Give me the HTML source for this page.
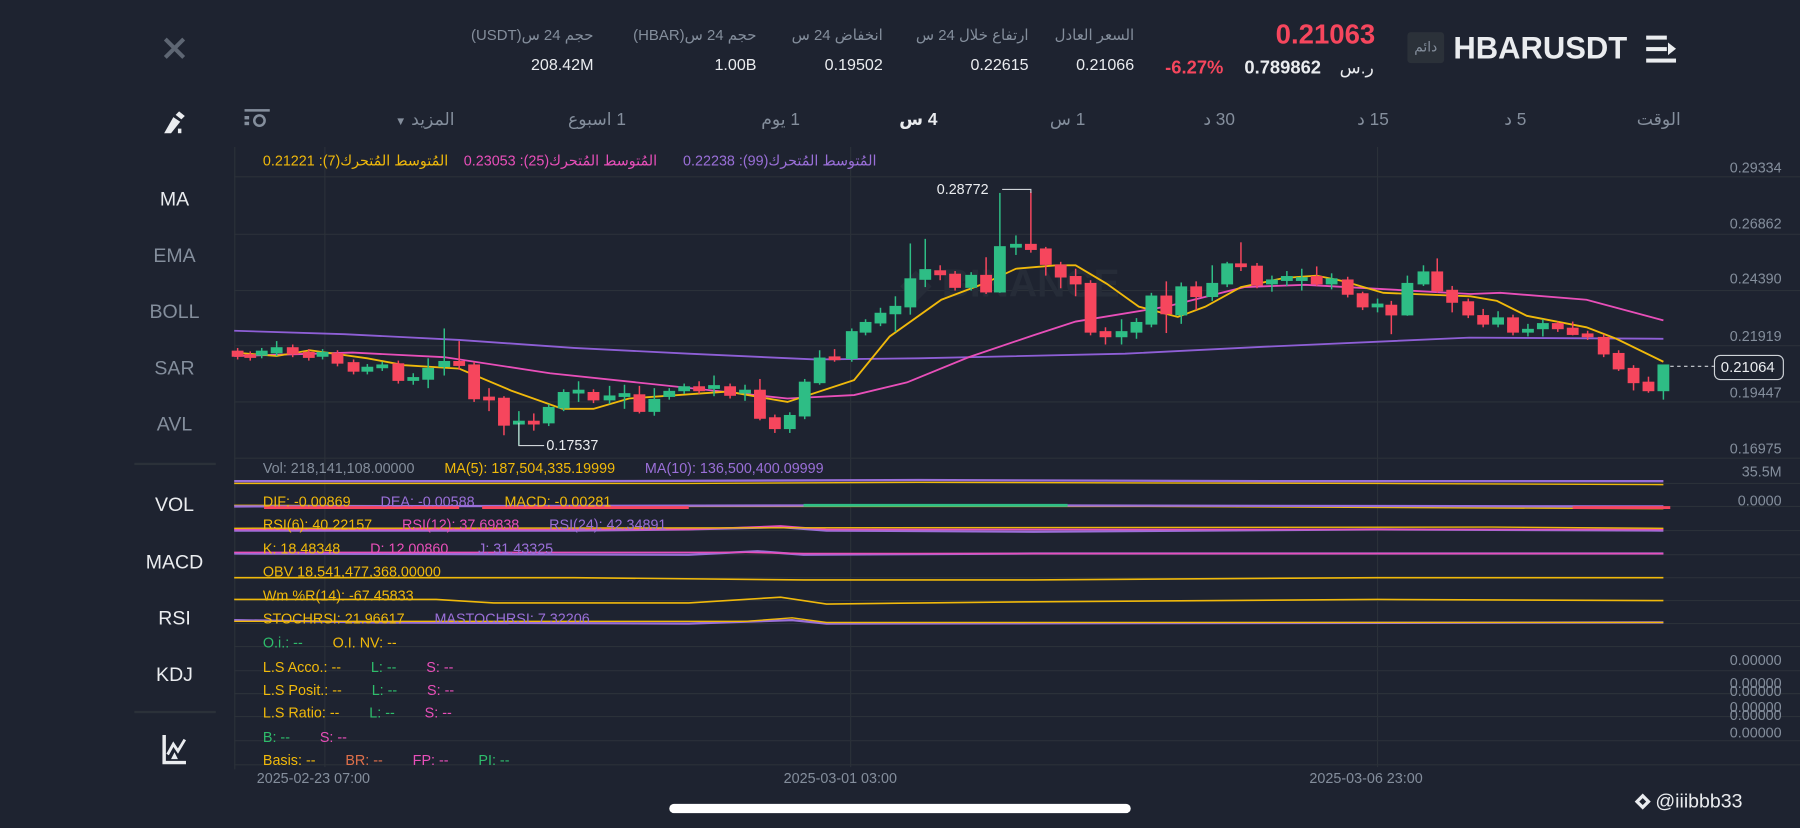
<!DOCTYPE html>
<html><head><meta charset="utf-8">
<style>
html,body{margin:0;padding:0;background:#1e2330;overflow:hidden;width:1800px;height:828px}
#w{position:absolute;left:0;top:0;width:1568px;height:721px;transform:scale(1.14796,1.1484);transform-origin:0 0;background:#1e2330;font-family:"Liberation Sans","DejaVu Sans",sans-serif;color:#848e9c}
.t{position:absolute;white-space:nowrap;line-height:1}
.r{text-align:right}
.g{color:#848e9c}.w{color:#eaecef}.y{color:#f0b90b}.p{color:#e84fb9}.v{color:#9a6fd8}.gr{color:#2ebd6b}.rd{color:#f6465d}.or{color:#e0704a}
.sb{position:absolute;left:102px;width:100px;text-align:center;font-size:17px;line-height:1}
.tab{position:absolute;top:97px;font-size:15px;line-height:1;color:#848e9c;transform:translateX(-50%)}
.ind{position:absolute;left:229px;font-size:12.5px;line-height:1;white-space:nowrap}
.ind span{margin-right:26px}
.ax{position:absolute;right:16px;font-size:12.5px;line-height:1;color:#848e9c;text-align:right}
</style></head><body><div id="w">
<svg width="1568" height="721" style="position:absolute;left:0;top:0">
<path d="M144 34 L160 50 M160 34 L144 50" stroke="#5e6673" stroke-width="3.5"/>
<path d="M143 116 L151 102 L157 106 L149 116 Z" fill="#eaecef"/><path d="M153 100 L156 97 L161 101 L158 104 Z" fill="#eaecef"/><rect x="155" y="112" width="3" height="4" fill="#eaecef"/>
<rect x="213" y="95" width="22" height="2.2" fill="#848e9c"/><rect x="213" y="101" width="4" height="3" fill="#848e9c"/><rect x="213" y="106" width="4" height="3" fill="#848e9c"/><circle cx="226" cy="105" r="4.5" fill="none" stroke="#848e9c" stroke-width="2.2"/>
<rect x="1434" y="31" width="18" height="3.5" fill="#eaecef"/><rect x="1434" y="41" width="18" height="3.5" fill="#eaecef"/><rect x="1434" y="51" width="26" height="3.5" fill="#eaecef"/><path d="M1453 37 L1460 42.5 L1453 48 Z" fill="#eaecef"/>
<rect x="117" y="403" width="71" height="2" fill="#2b3139"/><rect x="117" y="619" width="71" height="2" fill="#2b3139"/>
<path d="M143 640 V664 H162" stroke="#eaecef" stroke-width="3" fill="none"/><path d="M146 657 L151 648 L155 654 L161 644" stroke="#eaecef" stroke-width="2.5" fill="none"/><path d="M149 661 L152 655 L155 661Z" fill="#eaecef"/>
<line x1="204.5" y1="128" x2="204.5" y2="670" stroke="#2b3139"/>
<g stroke="#2b3139" stroke-width="1">
<line x1="204" y1="154" x2="1568" y2="154"/><line x1="204" y1="204" x2="1568" y2="204"/><line x1="204" y1="253" x2="1568" y2="253"/><line x1="204" y1="301" x2="1568" y2="301"/><line x1="204" y1="350" x2="1568" y2="350"/><line x1="204" y1="399" x2="1568" y2="399"/>
<line x1="283" y1="128" x2="283" y2="668"/><line x1="741" y1="128" x2="741" y2="668"/><line x1="1200" y1="128" x2="1200" y2="668"/>
<line x1="204" y1="421" x2="1568" y2="421"/><line x1="204" y1="441" x2="1568" y2="441"/><line x1="204" y1="462" x2="1568" y2="462"/><line x1="204" y1="483" x2="1568" y2="483"/><line x1="204" y1="503" x2="1568" y2="503"/><line x1="204" y1="523" x2="1568" y2="523"/><line x1="204" y1="543" x2="1568" y2="543"/><line x1="204" y1="563" x2="1568" y2="563"/><line x1="204" y1="584" x2="1568" y2="584"/><line x1="204" y1="604" x2="1568" y2="604"/><line x1="204" y1="624" x2="1568" y2="624"/><line x1="204" y1="645" x2="1568" y2="645"/><line x1="204" y1="666" x2="1568" y2="666"/>
</g>
<text x="880" y="258" font-size="34" font-weight="bold" fill="#262c38" text-anchor="middle" font-family="Liberation Sans">◆ BINANCE</text>
<polyline fill="none" stroke="#8e5fd6" stroke-width="1.6" points="204,288 300,291 400,296 500,303 600,308 710,313 800,312 980,308 1100,302 1280,294 1449,295"/>
<polyline fill="none" stroke="#e84fb9" stroke-width="1.6" points="204,310 307,307 387,311 479,325 583,336 686,347 744,344 790,333 844,311 900,292 937,280 1016,267 1084,250 1137,248 1281,256 1307,255 1382,261 1449,279"/>
<polyline fill="none" stroke="#f0b90b" stroke-width="1.6" points="204,307 241,310 270,305 320,312 352,318 400,321 445,340 490,356 517,356 548,347 634,341 686,350 744,331 775,293 820,261 857,247 885,234 920,231 937,231 964,247 992,267 1026,276 1050,267 1081,250 1119,242 1147,240 1171,245 1205,255 1281,258 1304,262 1330,275 1382,285 1408,295 1449,315"/>
<g stroke-width="1.3">
<g stroke="#f6465d" fill="#f6465d">
<line x1="207" y1="303" x2="207" y2="313"/><rect x="202.5" y="306" width="9" height="4"/>
<line x1="218" y1="306" x2="218" y2="314"/><rect x="213.5" y="309" width="9" height="2"/>
<line x1="255" y1="300" x2="255" y2="311"/><rect x="250.5" y="303" width="9" height="5"/>
<line x1="269" y1="304" x2="269" y2="314"/><rect x="264.5" y="307" width="9" height="4"/>
<line x1="294" y1="305" x2="294" y2="319"/><rect x="289.5" y="308" width="9" height="8"/>
<line x1="308" y1="313" x2="308" y2="326"/><rect x="303.5" y="316" width="9" height="7"/>
<line x1="347" y1="314" x2="347" y2="334"/><rect x="342.5" y="317" width="9" height="14"/>
<line x1="400" y1="297" x2="400" y2="322"/><rect x="395.5" y="315" width="9" height="3"/>
<line x1="413" y1="315" x2="413" y2="350"/><rect x="408.5" y="318" width="9" height="29"/>
<line x1="426" y1="338" x2="426" y2="358"/><rect x="421.5" y="346" width="9" height="2"/>
<line x1="439" y1="345" x2="439" y2="379"/><rect x="434.5" y="347" width="9" height="23"/>
<line x1="465" y1="360" x2="465" y2="375"/><rect x="460.5" y="367" width="9" height="2"/>
<line x1="517" y1="339" x2="517" y2="351"/><rect x="512.5" y="342" width="9" height="6"/>
<line x1="557" y1="336" x2="557" y2="360"/><rect x="552.5" y="344" width="9" height="14"/>
<line x1="609" y1="332" x2="609" y2="343"/><rect x="604.5" y="337" width="9" height="3"/>
<line x1="636" y1="334" x2="636" y2="347"/><rect x="631.5" y="337" width="9" height="7"/>
<line x1="662" y1="330" x2="662" y2="366"/><rect x="657.5" y="340" width="9" height="24"/>
<line x1="675" y1="361" x2="675" y2="377"/><rect x="670.5" y="364" width="9" height="9"/>
<line x1="727" y1="304" x2="727" y2="315"/><rect x="722.5" y="311" width="9" height="2"/>
<line x1="819" y1="231" x2="819" y2="244"/><rect x="814.5" y="236" width="9" height="3"/>
<line x1="832" y1="236" x2="832" y2="253"/><rect x="827.5" y="239" width="9" height="11"/>
<line x1="859" y1="224" x2="859" y2="256"/><rect x="854.5" y="240" width="9" height="14"/>
<line x1="898" y1="167" x2="898" y2="220"/><rect x="893.5" y="213" width="9" height="4"/>
<line x1="911" y1="215" x2="911" y2="240"/><rect x="906.5" y="217" width="9" height="13"/>
<line x1="924" y1="228" x2="924" y2="251"/><rect x="919.5" y="231" width="9" height="10"/>
<line x1="937" y1="234" x2="937" y2="258"/><rect x="932.5" y="241" width="9" height="6"/>
<line x1="950" y1="244" x2="950" y2="292"/><rect x="945.5" y="247" width="9" height="42"/>
<line x1="963" y1="285" x2="963" y2="300"/><rect x="958.5" y="289" width="9" height="4"/>
<line x1="1016" y1="245" x2="1016" y2="290"/><rect x="1011.5" y="258" width="9" height="15"/>
<line x1="1042" y1="245" x2="1042" y2="270"/><rect x="1037.5" y="250" width="9" height="8"/>
<line x1="1081" y1="211" x2="1081" y2="236"/><rect x="1076.5" y="230" width="9" height="2"/>
<line x1="1095" y1="229" x2="1095" y2="251"/><rect x="1090.5" y="232" width="9" height="16"/>
<line x1="1147" y1="232" x2="1147" y2="249"/><rect x="1142.5" y="241" width="9" height="6"/>
<line x1="1174" y1="241" x2="1174" y2="259"/><rect x="1169.5" y="244" width="9" height="12"/>
<line x1="1187" y1="254" x2="1187" y2="270"/><rect x="1182.5" y="256" width="9" height="11"/>
<line x1="1212" y1="262" x2="1212" y2="291"/><rect x="1207.5" y="266" width="9" height="8"/>
<line x1="1252" y1="225" x2="1252" y2="255"/><rect x="1247.5" y="237" width="9" height="16"/>
<line x1="1265" y1="249" x2="1265" y2="272"/><rect x="1260.5" y="253" width="9" height="10"/>
<line x1="1279" y1="260" x2="1279" y2="277"/><rect x="1274.5" y="263" width="9" height="11"/>
<line x1="1292" y1="269" x2="1292" y2="285"/><rect x="1287.5" y="275" width="9" height="7"/>
<line x1="1318" y1="274" x2="1318" y2="292"/><rect x="1313.5" y="277" width="9" height="12"/>
<line x1="1357" y1="280" x2="1357" y2="289"/><rect x="1352.5" y="282" width="9" height="4"/>
<line x1="1370" y1="280" x2="1370" y2="292"/><rect x="1365.5" y="286" width="9" height="5"/>
<line x1="1383" y1="288" x2="1383" y2="296"/><rect x="1378.5" y="291" width="9" height="2"/>
<line x1="1397" y1="291" x2="1397" y2="311"/><rect x="1392.5" y="294" width="9" height="14"/>
<line x1="1410" y1="305" x2="1410" y2="323"/><rect x="1405.5" y="308" width="9" height="13"/>
<line x1="1423" y1="318" x2="1423" y2="340"/><rect x="1418.5" y="321" width="9" height="12"/>
<line x1="1436" y1="328" x2="1436" y2="342"/><rect x="1431.5" y="333" width="9" height="7"/>
</g>
<g stroke="#2ebd85" fill="#2ebd85">
<line x1="228" y1="303" x2="228" y2="312"/><rect x="223.5" y="306" width="9" height="3"/>
<line x1="241" y1="297" x2="241" y2="310"/><rect x="236.5" y="303" width="9" height="4"/>
<line x1="281" y1="304" x2="281" y2="313"/><rect x="276.5" y="307" width="9" height="3"/>
<line x1="320" y1="317" x2="320" y2="326"/><rect x="315.5" y="320" width="9" height="3"/>
<line x1="333" y1="315" x2="333" y2="323"/><rect x="328.5" y="318" width="9" height="2"/>
<line x1="360" y1="325" x2="360" y2="335"/><rect x="355.5" y="329" width="9" height="2"/>
<line x1="373" y1="312" x2="373" y2="338"/><rect x="368.5" y="321" width="9" height="9"/>
<line x1="387" y1="286" x2="387" y2="327"/><rect x="382.5" y="315" width="9" height="4"/>
<line x1="452" y1="358" x2="452" y2="388"/><rect x="447.5" y="367" width="9" height="2"/>
<line x1="478" y1="352" x2="478" y2="371"/><rect x="473.5" y="355" width="9" height="13"/>
<line x1="491" y1="339" x2="491" y2="358"/><rect x="486.5" y="342" width="9" height="13"/>
<line x1="504" y1="332" x2="504" y2="350"/><rect x="499.5" y="340" width="9" height="2"/>
<line x1="531" y1="336" x2="531" y2="352"/><rect x="526.5" y="345" width="9" height="3"/>
<line x1="544" y1="335" x2="544" y2="356"/><rect x="539.5" y="343" width="9" height="2"/>
<line x1="570" y1="338" x2="570" y2="362"/><rect x="565.5" y="348" width="9" height="10"/>
<line x1="583" y1="338" x2="583" y2="348"/><rect x="578.5" y="341" width="9" height="4"/>
<line x1="596" y1="334" x2="596" y2="343"/><rect x="591.5" y="337" width="9" height="3"/>
<line x1="622" y1="327" x2="622" y2="345"/><rect x="617.5" y="336" width="9" height="2"/>
<line x1="649" y1="335" x2="649" y2="349"/><rect x="644.5" y="340" width="9" height="2"/>
<line x1="688" y1="359" x2="688" y2="377"/><rect x="683.5" y="362" width="9" height="11"/>
<line x1="701" y1="330" x2="701" y2="365"/><rect x="696.5" y="333" width="9" height="29"/>
<line x1="714" y1="305" x2="714" y2="335"/><rect x="709.5" y="312" width="9" height="21"/>
<line x1="742" y1="286" x2="742" y2="315"/><rect x="737.5" y="289" width="9" height="23"/>
<line x1="754" y1="278" x2="754" y2="292"/><rect x="749.5" y="281" width="9" height="8"/>
<line x1="767" y1="268" x2="767" y2="284"/><rect x="762.5" y="273" width="9" height="8"/>
<line x1="780" y1="258" x2="780" y2="289"/><rect x="775.5" y="267" width="9" height="6"/>
<line x1="793" y1="212" x2="793" y2="274"/><rect x="788.5" y="243" width="9" height="24"/>
<line x1="806" y1="208" x2="806" y2="250"/><rect x="801.5" y="235" width="9" height="8"/>
<line x1="846" y1="237" x2="846" y2="253"/><rect x="841.5" y="240" width="9" height="10"/>
<line x1="871" y1="168" x2="871" y2="255"/><rect x="866.5" y="215" width="9" height="39"/>
<line x1="885" y1="205" x2="885" y2="222"/><rect x="880.5" y="213" width="9" height="2"/>
<line x1="977" y1="278" x2="977" y2="300"/><rect x="972.5" y="289" width="9" height="4"/>
<line x1="990" y1="277" x2="990" y2="295"/><rect x="985.5" y="281" width="9" height="8"/>
<line x1="1003" y1="255" x2="1003" y2="285"/><rect x="998.5" y="258" width="9" height="24"/>
<line x1="1029" y1="246" x2="1029" y2="282"/><rect x="1024.5" y="250" width="9" height="24"/>
<line x1="1056" y1="231" x2="1056" y2="262"/><rect x="1051.5" y="247" width="9" height="11"/>
<line x1="1069" y1="228" x2="1069" y2="250"/><rect x="1064.5" y="230" width="9" height="17"/>
<line x1="1108" y1="240" x2="1108" y2="254"/><rect x="1103.5" y="244" width="9" height="3"/>
<line x1="1121" y1="236" x2="1121" y2="249"/><rect x="1116.5" y="241" width="9" height="3"/>
<line x1="1134" y1="234" x2="1134" y2="253"/><rect x="1129.5" y="242" width="9" height="2"/>
<line x1="1160" y1="238" x2="1160" y2="252"/><rect x="1155.5" y="243" width="9" height="4"/>
<line x1="1200" y1="260" x2="1200" y2="272"/><rect x="1195.5" y="265" width="9" height="2"/>
<line x1="1226" y1="240" x2="1226" y2="275"/><rect x="1221.5" y="247" width="9" height="27"/>
<line x1="1240" y1="231" x2="1240" y2="249"/><rect x="1235.5" y="237" width="9" height="10"/>
<line x1="1305" y1="271" x2="1305" y2="285"/><rect x="1300.5" y="277" width="9" height="5"/>
<line x1="1331" y1="282" x2="1331" y2="293"/><rect x="1326.5" y="287" width="9" height="2"/>
<line x1="1344" y1="278" x2="1344" y2="293"/><rect x="1339.5" y="282" width="9" height="4"/>
<line x1="1449" y1="318" x2="1449" y2="348"/><rect x="1444.5" y="318" width="9" height="22"/>
</g></g>
<polyline points="873,165 898,165 898,168" fill="none" stroke="#cfd3d8" stroke-width="1"/>
<polyline points="452,368 452,388 474,388" fill="none" stroke="#cfd3d8" stroke-width="1"/>
<line x1="1455" y1="319" x2="1493" y2="319" stroke="#cfd3d8" stroke-dasharray="3,3"/>
<rect x="1493.5" y="309.5" width="60" height="21" rx="5" fill="#1e2330" stroke="#cfd3d8"/>
<g fill="none" stroke-width="2">
<polyline stroke="#9a6fd8" points="204,419 500,419 800,418 1100,419 1449,419"/>
<polyline stroke="#f0b90b" stroke-width="1.2" points="204,421 600,421 800,420 1200,421 1449,422"/>
<polyline stroke="#f0b90b" stroke-width="1.2" points="204,440 600,441 1000,441 1449,443"/>
<polyline stroke="#9a6fd8" points="204,441 800,440 1449,441"/>
<polyline stroke="#9a6fd8" points="204,462 500,462 600,461 680,459 720,462 900,463 1200,461 1449,462"/>
<polyline stroke="#e84fb9" stroke-width="1.4" points="204,461 600,461 680,458 720,461 1449,461"/>
<polyline stroke="#f0b90b" stroke-width="1.2" points="204,460 1300,459 1449,460"/>
<polyline stroke="#9a6fd8" points="204,482 600,483 660,480 700,483 900,482 1449,482"/>
<polyline stroke="#e84fb9" stroke-width="1.4" points="204,481 650,481 700,482 1449,482"/>
<polyline stroke="#f0b90b" stroke-width="1.4" points="204,503 500,503 700,505 900,505 1200,503 1449,503"/>
<polyline stroke="#f0b90b" stroke-width="1.4" points="204,522 380,522 430,525 600,525 680,520 720,526 900,524 1200,522 1449,523"/>
<polyline stroke="#9a6fd8" points="204,540 330,542 600,543 690,540 720,543 1449,542"/>
<polyline stroke="#f0b90b" stroke-width="1.2" points="204,541 650,541 690,538 720,542 1449,542"/>
<g stroke-width="2.5">
<line x1="230" y1="442" x2="400" y2="442" stroke="#f6465d"/><line x1="420" y1="442" x2="600" y2="442" stroke="#f6465d"/><line x1="700" y1="440" x2="930" y2="440" stroke="#2ebd85"/><line x1="1370" y1="442" x2="1455" y2="442" stroke="#f6465d"/>
</g></g>
<rect x="583" y="700" width="402" height="8" rx="4" fill="#ffffff"/>
<path d="M1431 691 L1438 698 L1431 705 L1424 698 Z M1431 695 L1434 698 L1431 701 L1428 698Z" fill="#eaecef" fill-rule="evenodd"/>
</svg>

<div class="t r g" dir="rtl" style="right:1051px;top:24px;font-size:13px">حجم 24 س(USDT)</div>
<div class="t r w" style="right:1051px;top:49px;font-size:14px">208.42M</div>
<div class="t r g" dir="rtl" style="right:909px;top:24px;font-size:13px">حجم 24 س(HBAR)</div>
<div class="t r w" style="right:909px;top:49px;font-size:14px">1.00B</div>
<div class="t r g" dir="rtl" style="right:799px;top:24px;font-size:13px">انخفاض 24 س</div>
<div class="t r w" style="right:799px;top:49px;font-size:14px">0.19502</div>
<div class="t r g" dir="rtl" style="right:672px;top:24px;font-size:13px">ارتفاع خلال 24 س</div>
<div class="t r w" style="right:672px;top:49px;font-size:14px">0.22615</div>
<div class="t r g" dir="rtl" style="right:580px;top:24px;font-size:13px">السعر العادل</div>
<div class="t r w" style="right:580px;top:49px;font-size:14px">0.21066</div>
<div class="t r rd" style="right:370px;top:19px;font-size:24px;font-weight:bold">0.21063</div>
<div class="t rd" style="left:1015px;top:52px;font-size:16px;font-weight:bold">-6.27%</div>
<div class="t w" style="left:1084px;top:52px;font-size:16px;font-weight:bold">0.789862</div>
<div class="t w" style="left:1167px;top:52px;font-size:15px">ر.س</div>
<div class="t g" style="left:1226px;top:28px;width:32px;height:27px;background:#2b3139;border-radius:3px;font-size:12px;line-height:27px;text-align:center">دائم</div>
<div class="t w" style="left:1266px;top:29px;font-size:27px;font-weight:bold">HBARUSDT</div>

<div class="tab" dir="rtl" style="left:1445px">الوقت</div>
<div class="tab" dir="rtl" style="left:1320px">5 د</div>
<div class="tab" dir="rtl" style="left:1196px">15 د</div>
<div class="tab" dir="rtl" style="left:1062px">30 د</div>
<div class="tab" dir="rtl" style="left:930px">1 س</div>
<div class="tab" dir="rtl" style="left:800px;color:#eaecef;font-weight:bold">4 س</div>
<div class="tab" dir="rtl" style="left:680px">1 يوم</div>
<div class="tab" dir="rtl" style="left:520px">1 اسبوع</div>
<div class="tab" dir="rtl" style="left:370px">المزيد <span style="font-size:10px">▼</span></div>

<div class="sb w" style="top:165px">MA</div>
<div class="sb g" style="top:214px">EMA</div>
<div class="sb g" style="top:263px">BOLL</div>
<div class="sb g" style="top:312px">SAR</div>
<div class="sb g" style="top:361px">AVL</div>
<div class="sb w" style="top:431px">VOL</div>
<div class="sb w" style="top:481px">MACD</div>
<div class="sb w" style="top:530px">RSI</div>
<div class="sb w" style="top:579px">KDJ</div>

<div class="t y" dir="rtl" style="left:229px;top:134px;font-size:12.5px">المُتوسط المُتحرك(7): 0.21221</div>
<div class="t p" dir="rtl" style="left:404px;top:134px;font-size:12.5px">المُتوسط المُتحرك(25): 0.23053</div>
<div class="t v" dir="rtl" style="left:595px;top:134px;font-size:12.5px">المُتوسط المُتحرك(99): 0.22238</div>
<div class="t w" style="left:816px;top:159px;font-size:12.5px">0.28772</div>
<div class="t w" style="left:476px;top:382px;font-size:12.5px">0.17537</div>

<div class="ax" style="top:140px">0.29334</div>
<div class="ax" style="top:189px">0.26862</div>
<div class="ax" style="top:237px">0.24390</div>
<div class="ax" style="top:287px">0.21919</div>
<div class="ax" style="top:336px">0.19447</div>
<div class="ax" style="top:385px">0.16975</div>
<div class="t w" style="left:1499px;top:313px;font-size:13px">0.21064</div>
<div class="ax" style="top:405px">35.5M</div>
<div class="ax" style="top:430px">0.0000</div>
<div class="ax" style="top:569px">0.00000</div>
<div class="ax" style="top:589px">0.00000</div>
<div class="ax" style="top:596px">0.00000</div>
<div class="ax" style="top:610px">0.00000</div>
<div class="ax" style="top:617px">0.00000</div>
<div class="ax" style="top:632px">0.00000</div>

<div class="ind" style="top:402px"><span class="g">Vol: 218,141,108.00000</span><span class="y">MA(5): 187,504,335.19999</span><span class="v">MA(10): 136,500,400.09999</span></div>
<div class="ind" style="top:431px"><span class="y">DIF: -0.00869</span><span class="v">DEA: -0.00588</span><span class="y">MACD: -0.00281</span></div>
<div class="ind" style="top:451px"><span class="y">RSI(6): 40.22157</span><span class="p">RSI(12): 37.69838</span><span class="v">RSI(24): 42.34891</span></div>
<div class="ind" style="top:472px"><span class="y">K: 18.48348</span><span class="p">D: 12.00860</span><span class="v">J: 31.43325</span></div>
<div class="ind" style="top:492px"><span class="y">OBV 18,541,477,368.00000</span></div>
<div class="ind" style="top:513px"><span class="y">Wm %R(14): -67.45833</span></div>
<div class="ind" style="top:533px"><span class="y">STOCHRSI: 21.96617</span><span class="v">MASTOCHRSI: 7.32206</span></div>
<div class="ind" style="top:554px"><span class="gr">O.i.: --</span><span class="y">O.I. NV: --</span></div>
<div class="ind" style="top:575px"><span class="y">L.S Acco.: --</span><span class="gr">L: --</span><span class="p">S: --</span></div>
<div class="ind" style="top:595px"><span class="y">L.S Posit.: --</span><span class="gr">L: --</span><span class="p">S: --</span></div>
<div class="ind" style="top:615px"><span class="y">L.S Ratio: --</span><span class="gr">L: --</span><span class="p">S: --</span></div>
<div class="ind" style="top:636px"><span class="gr">B: --</span><span class="p">S: --</span></div>
<div class="ind" style="top:656px"><span class="y">Basis: --</span><span class="or">BR: --</span><span class="p">FP: --</span><span class="gr">PI: --</span></div>

<div class="t g" style="left:273px;top:672px;font-size:12.5px;transform:translateX(-50%)">2025-02-23 07:00</div>
<div class="t g" style="left:732px;top:672px;font-size:12.5px;transform:translateX(-50%)">2025-03-01 03:00</div>
<div class="t g" style="left:1190px;top:672px;font-size:12.5px;transform:translateX(-50%)">2025-03-06 23:00</div>
<div class="t w" style="left:1442px;top:689px;font-size:17px">@iiibbb33</div>
</div></body></html>
